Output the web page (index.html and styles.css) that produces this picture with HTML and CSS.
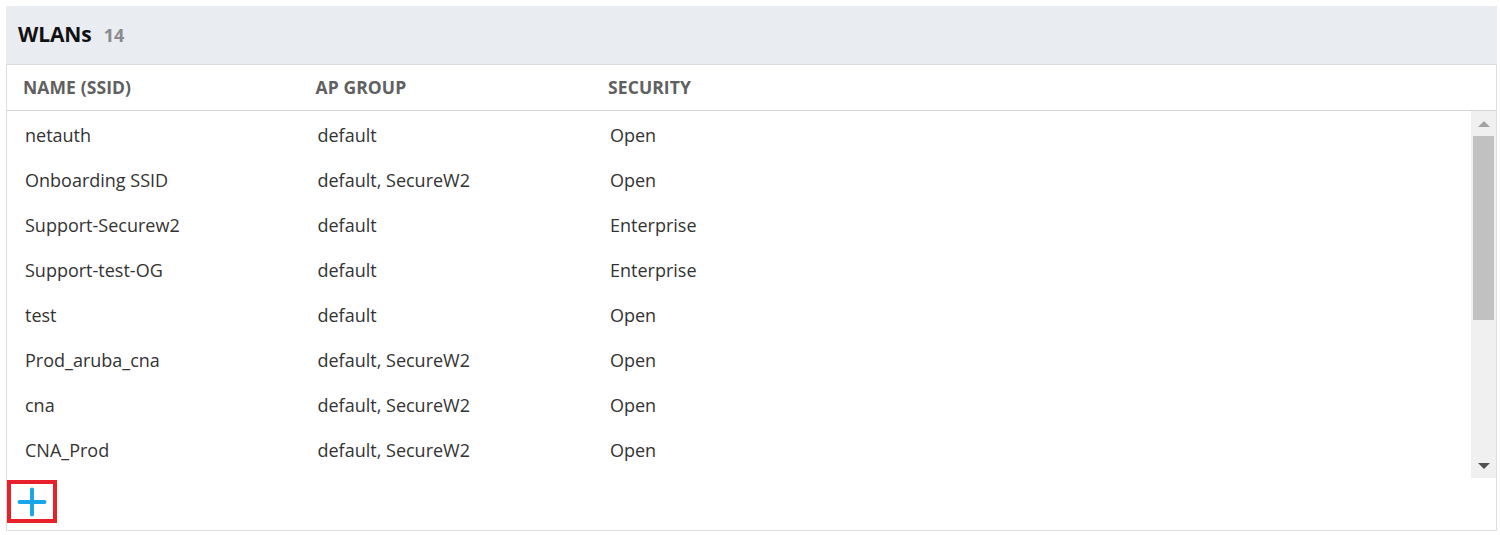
FILE: index.html
```html
<!DOCTYPE html>
<html>
<head>
<meta charset="utf-8">
<link rel="stylesheet" href="styles.css">
</head>
<body>
<div class="panel">
  <div class="panel-head">
    <span class="title">WLANs</span>
    <span class="count">14</span>
  </div>
  <div class="cols">
    <div class="col">NAME (SSID)</div>
    <div class="col">AP GROUP</div>
    <div class="col">SECURITY</div>
  </div>
  <div class="body">
    <div class="rows">
      <div class="row"><div class="cell">netauth</div><div class="cell">default</div><div class="cell">Open</div></div>
      <div class="row"><div class="cell">Onboarding SSID</div><div class="cell">default, SecureW2</div><div class="cell">Open</div></div>
      <div class="row"><div class="cell">Support-Securew2</div><div class="cell">default</div><div class="cell">Enterprise</div></div>
      <div class="row"><div class="cell">Support-test-OG</div><div class="cell">default</div><div class="cell">Enterprise</div></div>
      <div class="row"><div class="cell">test</div><div class="cell">default</div><div class="cell">Open</div></div>
      <div class="row"><div class="cell">Prod_aruba_cna</div><div class="cell">default, SecureW2</div><div class="cell">Open</div></div>
      <div class="row"><div class="cell">cna</div><div class="cell">default, SecureW2</div><div class="cell">Open</div></div>
      <div class="row"><div class="cell">CNA_Prod</div><div class="cell">default, SecureW2</div><div class="cell">Open</div></div>
    </div>
    <div class="scrollbar">
      <div class="sb-btn"><span class="arrow-up"></span></div>
      <div class="sb-track"><div class="sb-thumb"></div></div>
      <div class="sb-btn"><span class="arrow-down"></span></div>
    </div>
  </div>
  <div class="foot">
    <button class="add" type="button" aria-label="Add">
      <svg width="30" height="30" viewBox="0 0 30 30"><path d="M15 2.5v25M2.5 15h25" stroke="#1ba6ea" stroke-width="4" stroke-linecap="round" fill="none"/></svg>
    </button>
  </div>
</div>
</body>
</html>
```

FILE: styles.css
```css
* { box-sizing: border-box; }
html, body { margin: 0; padding: 0; background: #ffffff; }
body { font-family: "Open Sans", "Noto Sans", sans-serif; color: #333333; }

.panel {
  margin: 6px 0 0 6px;
  width: 1491px;
  height: 525px;
  border: 1px solid #dedede;
  border-top: none;
  display: flex;
  flex-direction: column;
}

.panel-head {
  height: 59px;
  margin: 0 -1px;
  background: #e9ecf1;
  border-bottom: 1px solid #d9dce0;
  display: flex;
  align-items: center;
  padding-left: 12px;
  padding-bottom: 2px;
  gap: 12px;
}
.title { font-size: 21px; font-weight: 700; color: #111111; letter-spacing: -0.1px; }
.count { font-size: 18px; font-weight: 700; color: #8a8a8a; padding-top: 2px; }

.cols {
  height: 46px;
  border-bottom: 1px solid #d6d6d6;
  display: grid;
  grid-template-columns: 292.5px 292.5px 1fr;
  align-items: center;
  padding-left: 16px;
  padding-bottom: 2px;
}
.col { font-size: 17.5px; font-weight: 700; color: #606060; letter-spacing: 0.1px; }

.body {
  height: 367px;
  display: flex;
}
.rows { flex: 1; overflow: hidden; }
.row {
  height: 45px;
  display: grid;
  grid-template-columns: 292.5px 292.5px 1fr;
  align-items: center;
  padding-left: 18px;
  padding-top: 3px;
  font-size: 18px;
  color: #333333;
}

.scrollbar {
  width: 25px;
  background: #f0f0f0;
  display: flex;
  flex-direction: column;
}
.sb-btn {
  height: 25px;
  display: flex;
  align-items: center;
  justify-content: center;
}
.arrow-up {
  width: 0; height: 0;
  border-left: 6px solid transparent;
  border-right: 6px solid transparent;
  border-bottom: 6px solid #a3a3a3;
}
.arrow-down {
  width: 0; height: 0;
  border-left: 6px solid transparent;
  border-right: 6px solid transparent;
  border-top: 6px solid #505050;
}
.sb-track { flex: 1; padding: 0 2px; }
.sb-thumb { height: 184px; background: #c1c1c1; }

.foot { flex: 1; padding-top: 2px; }
.add {
  width: 50px;
  height: 43px;
  margin: 0;
  padding: 0;
  border: 4px solid #e8202a;
  background: #ffffff;
  display: flex;
  align-items: center;
  justify-content: center;
}
```
